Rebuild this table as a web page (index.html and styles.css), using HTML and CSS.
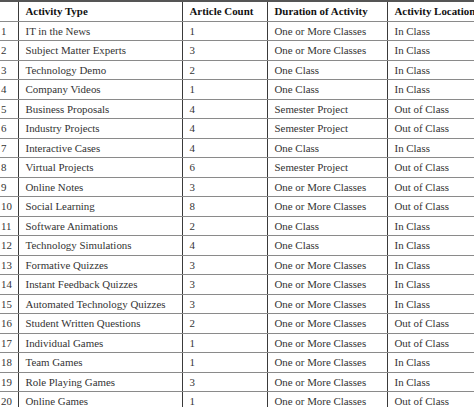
FILE: index.html
```html
<!DOCTYPE html>
<html>
<head>
<meta charset="utf-8">
<link rel="stylesheet" href="styles.css">
</head>
<body>
<table class="grid">
  <colgroup>
    <col class="c-num"><col class="c-type"><col class="c-count"><col class="c-dur"><col class="c-loc">
  </colgroup>
  <thead>
    <tr><th></th><th>Activity Type</th><th>Article Count</th><th>Duration of Activity</th><th>Activity Location</th></tr>
  </thead>
  <tbody>
    <tr><td>1</td><td>IT in the News</td><td>1</td><td>One or More Classes</td><td>In Class</td></tr>
    <tr><td>2</td><td>Subject Matter Experts</td><td>3</td><td>One or More Classes</td><td>In Class</td></tr>
    <tr><td>3</td><td>Technology Demo</td><td>2</td><td>One Class</td><td>In Class</td></tr>
    <tr><td>4</td><td>Company Videos</td><td>1</td><td>One Class</td><td>In Class</td></tr>
    <tr><td>5</td><td>Business Proposals</td><td>4</td><td>Semester Project</td><td>Out of Class</td></tr>
    <tr><td>6</td><td>Industry Projects</td><td>4</td><td>Semester Project</td><td>Out of Class</td></tr>
    <tr><td>7</td><td>Interactive Cases</td><td>4</td><td>One Class</td><td>In Class</td></tr>
    <tr><td>8</td><td>Virtual Projects</td><td>6</td><td>Semester Project</td><td>Out of Class</td></tr>
    <tr><td>9</td><td>Online Notes</td><td>3</td><td>One or More Classes</td><td>Out of Class</td></tr>
    <tr><td>10</td><td>Social Learning</td><td>8</td><td>One or More Classes</td><td>Out of Class</td></tr>
    <tr><td>11</td><td>Software Animations</td><td>2</td><td>One Class</td><td>In Class</td></tr>
    <tr><td>12</td><td>Technology Simulations</td><td>4</td><td>One Class</td><td>In Class</td></tr>
    <tr><td>13</td><td>Formative Quizzes</td><td>3</td><td>One or More Classes</td><td>In Class</td></tr>
    <tr><td>14</td><td>Instant Feedback Quizzes</td><td>3</td><td>One or More Classes</td><td>In Class</td></tr>
    <tr><td>15</td><td>Automated Technology Quizzes</td><td>3</td><td>One or More Classes</td><td>In Class</td></tr>
    <tr><td>16</td><td>Student Written Questions</td><td>2</td><td>One or More Classes</td><td>Out of Class</td></tr>
    <tr><td>17</td><td>Individual Games</td><td>1</td><td>One or More Classes</td><td>Out of Class</td></tr>
    <tr><td>18</td><td>Team Games</td><td>1</td><td>One or More Classes</td><td>In Class</td></tr>
    <tr><td>19</td><td>Role Playing Games</td><td>3</td><td>One or More Classes</td><td>In Class</td></tr>
    <tr><td>20</td><td>Online Games</td><td>1</td><td>One or More Classes</td><td>Out of Class</td></tr>
  </tbody>
</table>
</body>
</html>
```
FILE: styles.css
```css
html, body {
  margin: 0;
  padding: 0;
  background: #ffffff;
  overflow: hidden;
}
.grid {
  border-collapse: collapse;
  table-layout: fixed;
  width: 474px;
  font-family: "Liberation Serif", "Times New Roman", serif;
  font-size: 10.9px;
  color: #333333;
}
.c-num { width: 18px; }
.c-type { width: 164px; }
.c-count { width: 85px; }
.c-dur { width: 120px; }
.c-loc { width: 87px; }
.grid th, .grid td {
  padding: 0 0 0 7px;
  text-align: left;
  vertical-align: middle;
  white-space: nowrap;
  overflow: hidden;
  border-bottom: 1px solid #8a8a8a;
  border-left: 1px solid #3a3a3a;
}
.grid th:first-child, .grid td:first-child {
  border-left: none;
  padding-left: 1px;
}
.grid thead tr {
  height: 20px;
}
.grid thead th {
  border-top: 2px solid #555;
  font-weight: bold;
  color: #111;
}
.grid tbody tr {
  height: 19.5px;
}
```
